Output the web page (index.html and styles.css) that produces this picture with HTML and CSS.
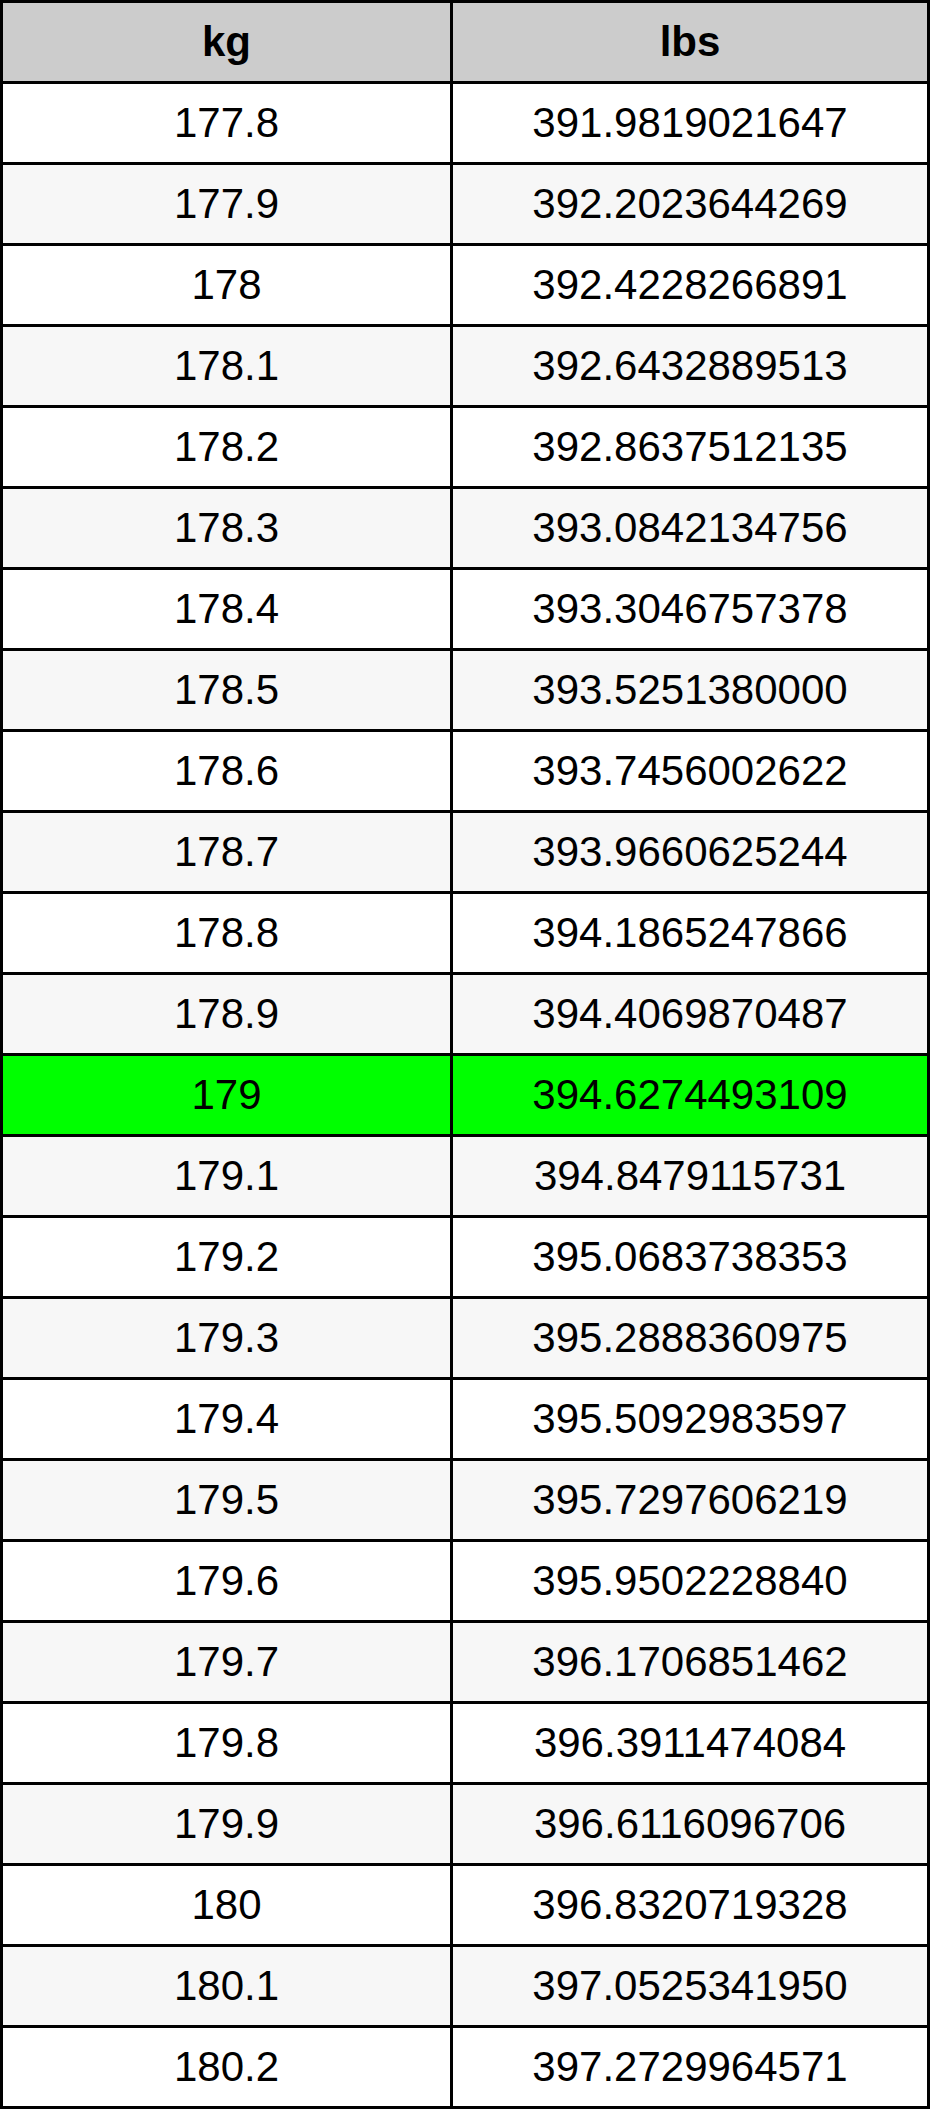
FILE: index.html
```html
<!DOCTYPE html>
<html>
<head>
<meta charset="utf-8">
<link rel="stylesheet" href="styles.css">
</head>
<body>
<table class="conv">
<thead>
<tr><th>kg</th><th>lbs</th></tr>
</thead>
<tbody>
<tr><td>177.8</td><td>391.9819021647</td></tr>
<tr><td>177.9</td><td>392.2023644269</td></tr>
<tr><td>178</td><td>392.4228266891</td></tr>
<tr><td>178.1</td><td>392.6432889513</td></tr>
<tr><td>178.2</td><td>392.8637512135</td></tr>
<tr><td>178.3</td><td>393.0842134756</td></tr>
<tr><td>178.4</td><td>393.3046757378</td></tr>
<tr><td>178.5</td><td>393.5251380000</td></tr>
<tr><td>178.6</td><td>393.7456002622</td></tr>
<tr><td>178.7</td><td>393.9660625244</td></tr>
<tr><td>178.8</td><td>394.1865247866</td></tr>
<tr><td>178.9</td><td>394.4069870487</td></tr>
<tr class="hl"><td>179</td><td>394.6274493109</td></tr>
<tr><td>179.1</td><td>394.8479115731</td></tr>
<tr><td>179.2</td><td>395.0683738353</td></tr>
<tr><td>179.3</td><td>395.2888360975</td></tr>
<tr><td>179.4</td><td>395.5092983597</td></tr>
<tr><td>179.5</td><td>395.7297606219</td></tr>
<tr><td>179.6</td><td>395.9502228840</td></tr>
<tr><td>179.7</td><td>396.1706851462</td></tr>
<tr><td>179.8</td><td>396.3911474084</td></tr>
<tr><td>179.9</td><td>396.6116096706</td></tr>
<tr><td>180</td><td>396.8320719328</td></tr>
<tr><td>180.1</td><td>397.0525341950</td></tr>
<tr><td>180.2</td><td>397.2729964571</td></tr>
</tbody>
</table>
</body>
</html>
```
FILE: styles.css
```css
html, body {
  margin: 0;
  padding: 0;
  background: #ffffff;
}
.conv {
  border-collapse: collapse;
  width: 930px;
  table-layout: fixed;
  font-family: "Liberation Sans", Arial, sans-serif;
  font-size: 42px;
  color: #000;
}
.conv th, .conv td {
  border: 3px solid #000;
  height: 78px;
  padding: 0;
  text-align: center;
  vertical-align: middle;
  box-sizing: content-box;
}
.conv th:first-child, .conv td:first-child {
  width: 447px;
}
.conv th {
  background: #cccccc;
  font-weight: bold;
}
.conv tbody tr:nth-child(even) td {
  background: #f7f7f7;
}
.conv tbody tr.hl td {
  background: #00ff00;
}
```
